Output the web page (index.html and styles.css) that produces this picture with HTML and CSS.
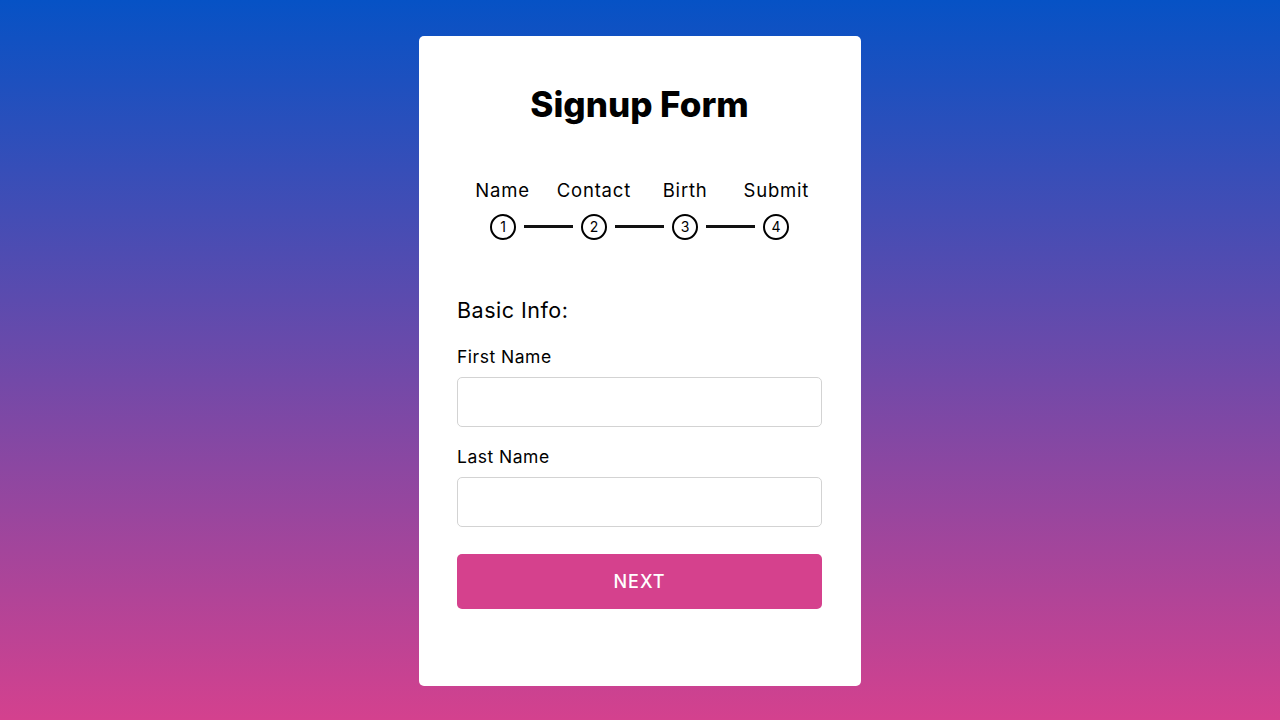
FILE: index.html
```html
<!DOCTYPE html>
<html lang="en">
<head>
<meta charset="utf-8">
<title>Signup Form</title>
<link rel="stylesheet" href="styles.css">
</head>
<body>
<div class="card">
  <h1 class="title">Signup Form</h1>
  <div class="steps">
    <div class="labels">
      <span>Name</span><span>Contact</span><span>Birth</span><span>Submit</span>
    </div>
    <div class="track">
      <span class="dot">1</span><span class="line"></span>
      <span class="dot">2</span><span class="line"></span>
      <span class="dot">3</span><span class="line"></span>
      <span class="dot">4</span>
    </div>
  </div>
  <form class="form">
    <div class="section">Basic Info:</div>
    <label class="field-label">First Name</label>
    <input class="input" type="text">
    <label class="field-label second">Last Name</label>
    <input class="input" type="text">
    <button class="next" type="button">NEXT</button>
  </form>
</div>
</body>
</html>
```
FILE: styles.css
```css
* { box-sizing: border-box; }
html, body { margin: 0; height: 100%; }
body {
  font-family: "Inter", "Noto Sans", sans-serif;
  color: #000;
  background: linear-gradient(180deg, #0652c5 0%, #d4418e 100%);
  display: flex;
  align-items: center;
  justify-content: center;
}
.card {
  width: 442px;
  height: 650px;
  margin-top: 1px;
  background: #fff;
  border-radius: 5px;
  padding: 48px 39px 0 38px;
}
.title {
  margin: 0;
  text-align: center;
  font-size: 35px;
  line-height: 40px;
  font-weight: 800;
  letter-spacing: 0;
}
.steps { margin-top: 54px; }
.labels {
  display: grid;
  grid-template-columns: repeat(4, 1fr);
  text-align: center;
  font-size: 18.5px;
  line-height: 24px;
  letter-spacing: 0.8px;
}
.track {
  margin-top: 12px;
  display: flex;
  align-items: center;
  justify-content: center;
  gap: 8px;
}
.dot {
  width: 26px;
  height: 26px;
  border: 2px solid #000;
  border-radius: 50%;
  display: flex;
  align-items: center;
  justify-content: center;
  font-size: 14px;
  font-weight: 400;
  line-height: 1;
}
.line {
  width: 49px;
  height: 3px;
  background: #111;
}
.form {
  margin-top: 56px;
  display: flex;
  flex-direction: column;
}
.section {
  font-size: 21.5px;
  line-height: 28px;
  letter-spacing: 0.5px;
}
.field-label {
  margin-top: 21px;
  font-size: 17.5px;
  line-height: 24px;
  letter-spacing: 0.5px;
}
.field-label.second { margin-top: 18px; }
.input {
  margin-top: 8px;
  height: 50px;
  border: 1px solid #d3d3d3;
  border-radius: 5px;
  font: inherit;
}
.next {
  margin-top: 27px;
  height: 55px;
  border: none;
  border-radius: 5px;
  background: #d5418d;
  color: #fff;
  font-family: inherit;
  font-size: 18px;
  font-weight: 500;
  letter-spacing: 1px;
}
```
